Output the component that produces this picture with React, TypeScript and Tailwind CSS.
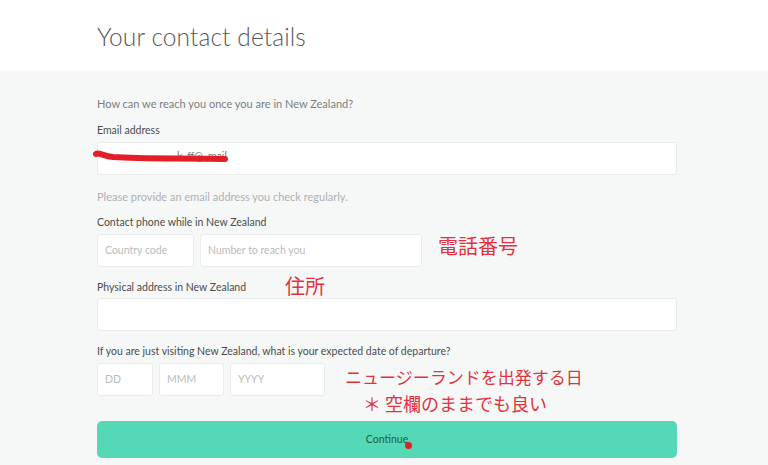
import React from 'react';

const font = { fontFamily: 'Lato, "Noto Sans", sans-serif' };
const jp = { fontFamily: '"Noto Sans CJK JP", sans-serif' };

const Field: React.FC<{ placeholder?: string; className?: string }> = ({ placeholder, className }) => (
  <div className={`h-[33px] bg-white border border-[#e9eceb] rounded-[3px] flex items-center px-[7px] text-[10.5px] text-[#b9bcbb] ${className ?? ''}`}>
    {placeholder}
  </div>
);

export default function App() {
  return (
    <div className="w-[768px] h-[465px] overflow-hidden bg-[#f6f8f8]" style={font}>
      {/* header */}
      <div className="h-[71px] bg-white pl-[97px] pt-[22px]">
        <h1 className="text-[24.5px] font-light text-[#585858] leading-[30px] tracking-[0.1px]">Your contact details</h1>
      </div>

      <div className="ml-[97px] w-[580px] pt-[26px]">
        <p className="text-[11px] text-[#7b7e7d] leading-[14px]">How can we reach you once you are in New Zealand?</p>

        <p className="mt-[12px] text-[10.5px] text-[#4a4c4b] leading-[14px]">Email address</p>
        <div className="relative mt-[5px]">
          <Field />
          <div className="absolute left-[80px] top-[8px] text-[10.5px] text-[#777] leading-[12px]">k..ff@..mail</div>
          <svg className="absolute left-[-4px] top-[8px]" width="140" height="14" viewBox="0 0 140 14">
            <path d="M3 4 C6 2, 10 6, 20 7 C50 9, 90 8, 132 9" stroke="#e41e26" strokeWidth="6" strokeLinecap="round" fill="none" />
          </svg>
        </div>

        <p className="mt-[15px] text-[11px] text-[#aeb1b0] leading-[14px]">Please provide an email address you check regularly.</p>

        <p className="mt-[11px] text-[10.5px] text-[#4a4c4b] leading-[14px]">Contact phone while in New Zealand</p>
        <div className="mt-[5px] flex items-start gap-[6px]">
          <Field placeholder="Country code" className="w-[97px]" />
          <Field placeholder="Number to reach you" className="w-[222px]" />
          <span className="ml-[10px] text-[20px] leading-[24px] text-[#e2323d]" style={jp}>
            電話番号
          </span>
        </div>

        <div className="mt-[9px] flex items-center h-[20px]">
          <p className="text-[10.5px] text-[#4a4c4b] leading-[14px] mt-[2px]">Physical address in New Zealand</p>
          <span className="ml-[39px] text-[20px] leading-[20px] text-[#e2323d]" style={jp}>
            住所
          </span>
        </div>
        <Field className="mt-[2px]" />

        <p className="mt-[13px] text-[10.5px] text-[#4a4c4b] leading-[14px]">If you are just visiting New Zealand, what is your expected date of departure?</p>
        <div className="mt-[5px] flex items-start gap-[6px]">
          <Field placeholder="DD" className="w-[56px]" />
          <Field placeholder="MMM" className="w-[65px]" />
          <Field placeholder="YYYY" className="w-[95px]" />
          <div className="ml-[14px] text-[#e2323d] text-[17px] leading-[27px]" style={jp}>
            <div>ニュージーランドを出発する日</div>
            <div className="pl-[18px] text-[18px]">＊ 空欄のままでも良い</div>
          </div>
        </div>

        <div className="relative mt-[4px] h-[37px] rounded-[5px] bg-[#55d8b5] flex items-center justify-center">
          <span className="text-[10.5px] text-[#24584a]">Continue</span>
          <span className="absolute left-[308px] top-[21px] w-[7px] h-[7px] rounded-full bg-[#e41e26]" />
        </div>
      </div>
    </div>
  );
}
